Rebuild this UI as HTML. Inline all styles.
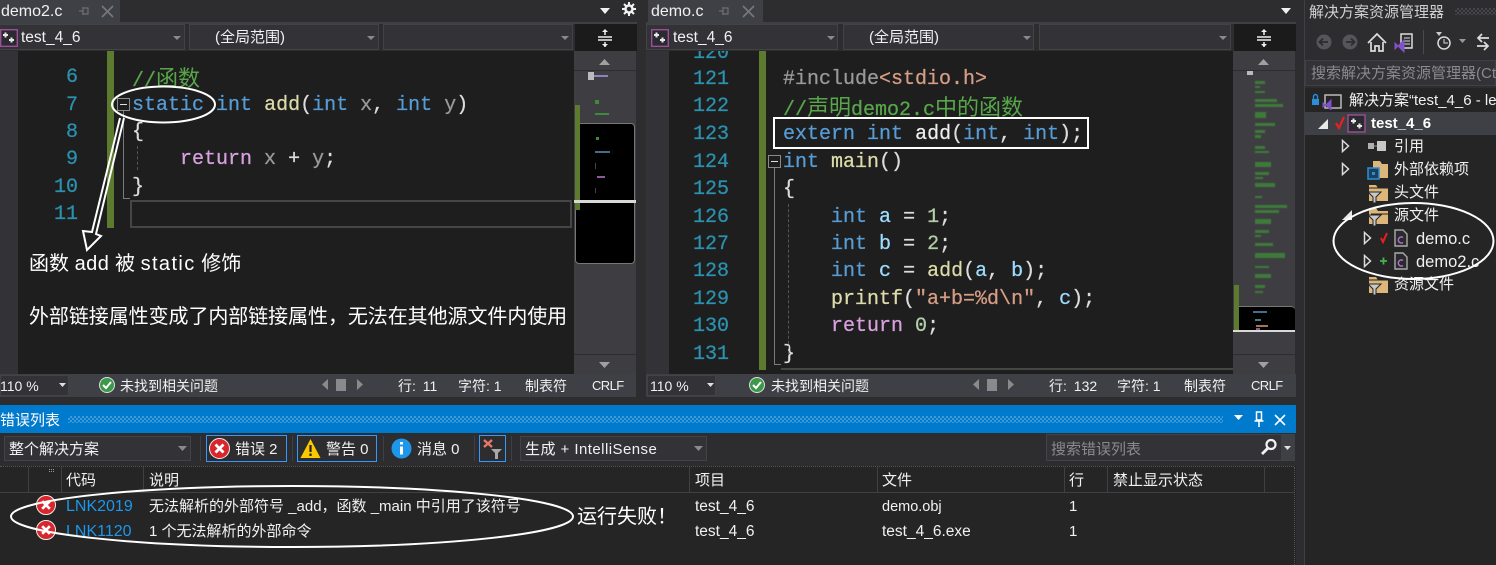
<!DOCTYPE html>
<html><head><meta charset="utf-8"><style>
html,body{margin:0;padding:0;background:#2d2d30;}
#r{position:relative;width:1496px;height:565px;overflow:hidden;background:#2d2d30;font-family:"Liberation Sans","Noto Sans CJK SC",sans-serif;color:#f1f1f1;font-size:15px;}
#r div{position:absolute;box-sizing:border-box;}
.u{white-space:pre;line-height:20px;height:21px;padding-top:1px;}
.c{white-space:pre;font-family:"Liberation Mono","Noto Sans CJK SC",monospace;font-size:20px;line-height:27px;height:27px;color:#dcdcdc;-webkit-text-stroke:.25px currentColor;}
.c i{font-style:normal;font-family:"Noto Sans CJK SC",sans-serif;font-size:22px;line-height:27px;-webkit-text-stroke:0;}
.n{white-space:pre;font-family:"Liberation Mono",monospace;font-size:20px;line-height:27px;height:27px;color:#2b91af;text-align:right;width:60px;-webkit-text-stroke:.25px currentColor;}
.k{color:#569cd6}.f{color:#dcdcaa}.g{color:#9a9a9a}.v{color:#9cdcfe}.m{color:#d8a0df}.o{color:#57a64a}.s{color:#d69d85}.b{color:#b5cea8}
.dd{background:#333337;border:1px solid #434346;height:26px;}
.big{white-space:pre;color:#fff;font-size:20px;line-height:28px;height:28px;}
.sep{width:1px;background:#3f3f46;}
</style></head><body><div id="r">

<!-- left tab + bars -->
<div style="left:0;top:0;width:120px;height:22px;background:#3f3f46"></div>
<div class="u" style="left:1px;top:1px;font-size:16px;color:#f1f1f1">demo2.c</div>
<svg style="position:absolute;left:78px;top:5px" width="12" height="12"><path d="M1 6h4M5 3h5v6H5zM5 2v8" stroke="#77777c" fill="none"/></svg>
<svg style="position:absolute;left:101px;top:5px" width="13" height="13"><path d="M1 1l11 11M12 1L1 12" stroke="#77777c" stroke-width="1.600"/></svg>
<div style="left:0;top:22px;width:637px;height:2px;background:#3f3f46"></div>
<div style="left:0;top:24px;width:637px;height:27px;background:#2d2d30"></div>
<div class="dd" style="left:-1px;top:24px;width:186px"></div>
<div class="dd" style="left:189px;top:24px;width:190px"></div>
<div class="dd" style="left:383px;top:24px;width:190px"></div>
<div class="u" style="left:21px;top:27px;font-size:15.500px">test_4_6</div>
<div class="u" style="left:215px;top:27px;font-size:15px">(全局范围)</div>
<svg style="position:absolute;left:0;top:29px" width="18" height="18"><rect x=".7" y=".7" width="16.6" height="16.6" fill="#2a2a30" stroke="#9b4f96" stroke-width="1.4"/><path d="M3 6h5M5.500 3.500v5M9 11h5M11.500 8.500v5" stroke="#e8e8e8" stroke-width="2"/></svg>
<svg style="position:absolute;left:172px;top:35px" width="12" height="6"><path d="M1 1h8L5 5z" fill="#8a8a8d"/></svg>
<svg style="position:absolute;left:366px;top:35px" width="12" height="6"><path d="M1 1h8L5 5z" fill="#8a8a8d"/></svg>
<svg style="position:absolute;left:560px;top:35px" width="12" height="6"><path d="M1 1h8L5 5z" fill="#8a8a8d"/></svg>
<div style="left:575px;top:24px;width:62px;height:27px;background:#1b1b1c"></div>
<svg style="position:absolute;left:597px;top:29px" width="16" height="18"><path d="M1 8h14M1 11h14M8 1v5M8 13v5" stroke="#eee" stroke-width="1.500"/><path d="M5 3l3-3 3 3zM5 15l3 3 3-3z" fill="#eee"/></svg>
<svg style="position:absolute;left:600px;top:8px" width="12" height="7"><path d="M0 0h10L5 6z" fill="#f1f1f1"/></svg>
<svg style="position:absolute;left:622px;top:2px" width="14" height="14" viewBox="0 0 14 14"><circle cx="7" cy="7" r="3.500" fill="none" stroke="#f1f1f1" stroke-width="2.500"/><path d="M7 0v3M7 11v3M0 7h3M11 7h3M2 2l2 2M10 10l2 2M12 2l-2 2M4 10l-2 2" stroke="#f1f1f1" stroke-width="2"/></svg>

<!-- left editor -->
<div style="left:0;top:51px;width:18px;height:323px;background:#333337"></div>
<div style="left:18px;top:51px;width:556px;height:323px;background:#1e1e1e"></div>
<div style="left:107px;top:51px;width:7px;height:177px;background:#5c7b2f"></div>
<div class="n" style="left:18px;top:64px">6</div>
<div class="n" style="left:18px;top:92px">7</div>
<div class="n" style="left:18px;top:119px">8</div>
<div class="n" style="left:18px;top:146px">9</div>
<div class="n" style="left:18px;top:174px">10</div>
<div class="n" style="left:18px;top:201px">11</div>
<div style="left:60px;top:51px;width:20px;height:4px;overflow:hidden"><div class="n" style="left:-42px;top:-20px">5</div></div>
<div class="c o" style="left:132px;top:64px">//<i>函数</i></div>
<div class="c" style="left:132px;top:92px"><span class="k">static</span> <span class="k">int</span> <span class="f">add</span>(<span class="k">int</span> <span class="g">x</span>, <span class="k">int</span> <span class="g">y</span>)</div>
<div class="c" style="left:132px;top:119px">{</div>
<div class="c" style="left:132px;top:146px">    <span class="m">return</span> <span class="g">x</span> + <span class="g">y</span>;</div>
<div class="c" style="left:132px;top:174px">}</div>
<div style="left:117px;top:98px;width:13px;height:13px;border:1px solid #8a8a8a;background:#1e1e1e"></div>
<div style="left:120px;top:104px;width:7px;height:1px;background:#e0e0e0"></div>
<div style="left:123px;top:111px;width:1px;height:88px;background:#7a7a7a"></div>
<div style="left:123px;top:198px;width:7px;height:1px;background:#7a7a7a"></div>
<div style="left:137px;top:146px;width:1px;height:24px;border-left:1px dashed #555"></div>
<div style="left:130px;top:200px;width:442px;height:28px;border:2px solid #464646"></div>

<!-- left scroll -->
<div style="left:574px;top:51px;width:62px;height:323px;background:#3e3e42"></div>
<div style="left:574px;top:70px;width:62px;height:1px;background:#2d2d30"></div>
<div style="left:574px;top:354px;width:62px;height:1px;background:#2d2d30"></div>
<svg style="position:absolute;left:598px;top:58px" width="14" height="8"><path d="M1 7h11L6.500 1z" fill="#a0a0a0"/></svg>
<svg style="position:absolute;left:598px;top:361px" width="14" height="8"><path d="M1 1h11L6.500 7z" fill="#a0a0a0"/></svg>
<div style="left:588px;top:72px;width:6px;height:8px;background:#bbb"></div>
<div style="left:594px;top:75px;width:14px;height:2px;background:#8a84c0"></div>
<div style="left:595px;top:100px;width:4px;height:4px;background:#3d8a3a"></div>
<div style="left:595px;top:113px;width:14px;height:2px;background:#3d8a3a"></div>
<div style="left:575px;top:123px;width:60px;height:141px;background:#000;border:1px solid #777;border-radius:4px"></div>
<div style="left:575px;top:105px;width:5px;height:105px;background:#5c7b2f"></div>
<div style="left:596px;top:137px;width:3px;height:3px;background:#3d8a3a"></div>
<div style="left:595px;top:151px;width:15px;height:2px;background:#4a6a8a"></div>
<div style="left:595px;top:163px;width:1px;height:6px;background:#444"></div>
<div style="left:597px;top:176px;width:8px;height:2px;background:#8a5a9a"></div>
<div style="left:595px;top:188px;width:1px;height:5px;background:#444"></div>
<div style="left:574px;top:200px;width:62px;height:3px;background:#d8d8d8"></div>

<!-- right tab + bars -->
<div style="left:648px;top:0;width:115px;height:22px;background:#3f3f46"></div>
<div class="u" style="left:651px;top:1px;font-size:16px">demo.c</div>
<svg style="position:absolute;left:718px;top:5px" width="12" height="12"><path d="M1 6h4M5 3h5v6H5zM5 2v8" stroke="#77777c" fill="none"/></svg>
<svg style="position:absolute;left:742px;top:5px" width="13" height="13"><path d="M1 1l11 11M12 1L1 12" stroke="#77777c" stroke-width="1.600"/></svg>
<div style="left:646px;top:22px;width:650px;height:2px;background:#3f3f46"></div>
<div class="dd" style="left:646px;top:24px;width:192px"></div>
<div class="dd" style="left:843px;top:24px;width:191px"></div>
<div class="dd" style="left:1039px;top:24px;width:192px"></div>
<div class="u" style="left:673px;top:27px;font-size:15.500px">test_4_6</div>
<div class="u" style="left:869px;top:27px;font-size:15px">(全局范围)</div>
<svg style="position:absolute;left:651px;top:29px" width="18" height="18"><rect x=".7" y=".7" width="16.6" height="16.6" fill="#2a2a30" stroke="#9b4f96" stroke-width="1.4"/><path d="M3 6h5M5.500 3.500v5M9 11h5M11.500 8.500v5" stroke="#e8e8e8" stroke-width="2"/></svg>
<svg style="position:absolute;left:826px;top:35px" width="12" height="6"><path d="M1 1h8L5 5z" fill="#8a8a8d"/></svg>
<svg style="position:absolute;left:1022px;top:35px" width="12" height="6"><path d="M1 1h8L5 5z" fill="#8a8a8d"/></svg>
<svg style="position:absolute;left:1218px;top:35px" width="12" height="6"><path d="M1 1h8L5 5z" fill="#8a8a8d"/></svg>
<div style="left:1234px;top:24px;width:62px;height:27px;background:#1b1b1c"></div>
<svg style="position:absolute;left:1256px;top:29px" width="16" height="18"><path d="M1 8h14M1 11h14M8 1v5M8 13v5" stroke="#eee" stroke-width="1.500"/><path d="M5 3l3-3 3 3zM5 15l3 3 3-3z" fill="#eee"/></svg>
<svg style="position:absolute;left:1281px;top:8px" width="12" height="7"><path d="M0 0h10L5 6z" fill="#f1f1f1"/></svg>

<!-- right editor -->
<div style="left:646px;top:51px;width:23px;height:323px;background:#333337"></div>
<div style="left:669px;top:51px;width:564px;height:323px;background:#1e1e1e"></div>
<div style="left:759px;top:51px;width:7px;height:319px;background:#5c7b2f"></div>
<div style="left:669px;top:51px;width:60px;height:12px;overflow:hidden"><div class="n" style="left:0;top:-11px">120</div></div>
<div class="n" style="left:669px;top:66px">121</div>
<div class="n" style="left:669px;top:93px">122</div>
<div class="n" style="left:669px;top:121px">123</div>
<div class="n" style="left:669px;top:149px">124</div>
<div class="n" style="left:669px;top:176px">125</div>
<div class="n" style="left:669px;top:204px">126</div>
<div class="n" style="left:669px;top:231px">127</div>
<div class="n" style="left:669px;top:258px">128</div>
<div class="n" style="left:669px;top:286px">129</div>
<div class="n" style="left:669px;top:313px">130</div>
<div class="n" style="left:669px;top:341px">131</div>
<div class="c" style="left:783px;top:66px"><span class="g">#include</span><span class="s">&lt;stdio.h&gt;</span></div>
<div class="c o" style="left:783px;top:93px">//<i>声明</i>demo2.c<i>中的函数</i></div>
<div class="c" style="left:783px;top:121px"><span class="k">extern</span> <span class="k">int</span> <span style="color:#eee">add</span>(<span class="k">int</span>, <span class="k">int</span>);</div>
<div class="c" style="left:783px;top:149px"><span class="k">int</span> <span class="f">main</span>()</div>
<div class="c" style="left:783px;top:176px">{</div>
<div class="c" style="left:783px;top:204px">    <span class="k">int</span> <span class="v">a</span> = <span class="b">1</span>;</div>
<div class="c" style="left:783px;top:231px">    <span class="k">int</span> <span class="v">b</span> = <span class="b">2</span>;</div>
<div class="c" style="left:783px;top:258px">    <span class="k">int</span> <span class="v">c</span> = <span class="f">add</span>(<span class="v">a</span>, <span class="v">b</span>);</div>
<div class="c" style="left:783px;top:286px">    <span class="f">printf</span>(<span class="s">"a+b=%d\n"</span>, <span class="v">c</span>);</div>
<div class="c" style="left:783px;top:313px">    <span class="m">return</span> <span class="b">0</span>;</div>
<div class="c" style="left:783px;top:341px">}</div>
<div style="left:768px;top:155px;width:13px;height:13px;border:1px solid #8a8a8a;background:#1e1e1e"></div>
<div style="left:771px;top:161px;width:7px;height:1px;background:#e0e0e0"></div>
<div style="left:774px;top:168px;width:1px;height:196px;background:#7a7a7a"></div>
<div style="left:774px;top:364px;width:7px;height:1px;background:#7a7a7a"></div>
<div style="left:788px;top:204px;width:1px;height:150px;border-left:1px dashed #555"></div>
<div style="left:781px;top:368px;width:452px;height:6px;border-top:2px solid #464646"></div>
<div style="left:773px;top:117px;width:316px;height:32px;border:2px solid #fff"></div>

<!-- right scroll -->
<div style="left:1233px;top:51px;width:62px;height:323px;background:#3e3e42"></div>
<div style="left:1233px;top:70px;width:62px;height:1px;background:#2d2d30"></div>
<div style="left:1233px;top:354px;width:62px;height:1px;background:#2d2d30"></div>
<svg style="position:absolute;left:1257px;top:58px" width="14" height="8"><path d="M1 7h11L6.500 1z" fill="#a0a0a0"/></svg>
<svg style="position:absolute;left:1257px;top:361px" width="14" height="8"><path d="M1 1h11L6.500 7z" fill="#a0a0a0"/></svg>
<div style="left:1247px;top:71px;width:6px;height:4px;background:#bbb"></div>
<svg style="position:absolute;left:1253px;top:78px;filter:blur(.6px);opacity:.8" width="40" height="230" fill="#3f8a38">
<rect x="2" y="3" width="10" height="3"/><rect x="2" y="8" width="5" height="2"/><rect x="2" y="13" width="10" height="2"/>
<rect x="2" y="21" width="22" height="3"/><rect x="2" y="26" width="28" height="3"/><rect x="2" y="34" width="11" height="6"/>
<rect x="2" y="45" width="20" height="3"/><rect x="2" y="52" width="10" height="3"/><rect x="2" y="57" width="6" height="3"/>
<rect x="2" y="68" width="10" height="3"/><rect x="2" y="73" width="14" height="2"/><rect x="2" y="84" width="16" height="5"/>
<rect x="2" y="94" width="14" height="3"/><rect x="2" y="99" width="8" height="2"/><rect x="2" y="105" width="20" height="4"/>
<rect x="2" y="118" width="7" height="2"/><rect x="2" y="127" width="32" height="3"/><rect x="2" y="132" width="24" height="3"/>
<rect x="2" y="141" width="16" height="5"/><rect x="2" y="152" width="14" height="3"/><rect x="2" y="157" width="6" height="2"/>
<rect x="2" y="165" width="18" height="3"/><rect x="2" y="175" width="30" height="5"/><rect x="2" y="188" width="14" height="2"/>
<rect x="2" y="196" width="16" height="4"/><rect x="2" y="207" width="10" height="3"/><rect x="2" y="213" width="8" height="2"/>
</svg>
<div style="left:1234px;top:306px;width:61px;height:24px;background:#000;border-top:1px solid #777;border-radius:4px 4px 0 0"></div>
<div style="left:1234px;top:285px;width:5px;height:45px;background:#5c7b2f"></div>
<div style="left:1253px;top:311px;width:14px;height:2px;background:#4a6a8a"></div>
<div style="left:1255px;top:319px;width:6px;height:2px;background:#4a7a8a"></div>
<div style="left:1256px;top:325px;width:12px;height:2px;background:#a07a4a"></div>
<div style="left:1256px;top:328px;width:4px;height:2px;background:#8a5a9a"></div>
<div style="left:1233px;top:330px;width:62px;height:2px;background:#d8d8d8"></div>

<!-- status bars -->
<div style="left:0;top:374px;width:636px;height:23px;background:#3f3f46"></div>
<div style="left:646px;top:374px;width:650px;height:23px;background:#3f3f46"></div>
<div style="left:0;top:375px;width:69px;height:21px;background:#333337;border:1px solid #434346"></div>
<div style="left:647px;top:375px;width:69px;height:21px;background:#333337;border:1px solid #434346"></div>
<div class="u" style="left:0;top:375px;font-size:14px">110 %</div>
<div class="u" style="left:650px;top:375px;font-size:14px">110 %</div>
<svg style="position:absolute;left:59px;top:383px" width="8" height="5"><path d="M0 0h7L3.500 4z" fill="#e0e0e0"/></svg>
<svg style="position:absolute;left:707px;top:383px" width="8" height="5"><path d="M0 0h7L3.500 4z" fill="#e0e0e0"/></svg>
<svg style="position:absolute;left:99px;top:377px" width="16" height="16"><circle cx="8" cy="8" r="7.500" fill="#3a9a4a" stroke="#ddd"/><path d="M4 8l3 3 5-6" stroke="#fff" stroke-width="2" fill="none"/></svg>
<svg style="position:absolute;left:749px;top:377px" width="16" height="16"><circle cx="8" cy="8" r="7.500" fill="#3a9a4a" stroke="#ddd"/><path d="M4 8l3 3 5-6" stroke="#fff" stroke-width="2" fill="none"/></svg>
<div class="u" style="left:120px;top:375px;font-size:14px;color:#f1f1f1">未找到相关问题</div>
<div class="u" style="left:771px;top:375px;font-size:14px;color:#f1f1f1">未找到相关问题</div>
<svg style="position:absolute;left:321px;top:378px" width="42" height="14"><path d="M7 1v11L1 6.500z" fill="#8a8a8d"/><rect x="15" y="1" width="10" height="12" fill="#8a8a8d"/><path d="M36 1v11l6-5.500z" fill="#8a8a8d"/></svg>
<svg style="position:absolute;left:972px;top:378px" width="42" height="14"><path d="M7 1v11L1 6.500z" fill="#8a8a8d"/><rect x="15" y="1" width="10" height="12" fill="#8a8a8d"/><path d="M36 1v11l6-5.500z" fill="#8a8a8d"/></svg>
<div class="u" style="left:398px;top:375px;font-size:14px;word-spacing:3px">行: 11</div>
<div class="u" style="left:458px;top:375px;font-size:14px">字符: 1</div>
<div class="u" style="left:525px;top:375px;font-size:14px">制表符</div>
<div class="u" style="left:592px;top:375px;font-size:13px;letter-spacing:-.6px">CRLF</div>
<div class="u" style="left:1049px;top:375px;font-size:14px;word-spacing:3px">行: 132</div>
<div class="u" style="left:1117px;top:375px;font-size:14px">字符: 1</div>
<div class="u" style="left:1184px;top:375px;font-size:14px">制表符</div>
<div class="u" style="left:1251px;top:375px;font-size:13px;letter-spacing:-.6px">CRLF</div>

<!-- error list -->
<div style="left:0;top:405px;width:1296px;height:28px;background:#007acc"></div>
<div style="left:68px;top:416px;width:1155px;height:7px;background:repeating-conic-gradient(#3f9bd8 0 25%,#007acc 0 50%) 0 0/4px 4px"></div>
<div class="u" style="left:0;top:410px;font-size:15px;color:#fff">错误列表</div>
<svg style="position:absolute;left:1234px;top:415px" width="10" height="6"><path d="M0 0h9L4.500 5z" fill="#fff"/></svg>
<svg style="position:absolute;left:1253px;top:411px" width="12" height="16"><path d="M3.500 1h5v8h-5zM1.500 10h9M6 10v6" stroke="#fff" stroke-width="1.500" fill="none"/></svg>
<svg style="position:absolute;left:1274px;top:414px" width="12" height="12"><path d="M1 1l10 10M11 1L1 11" stroke="#fff" stroke-width="1.600"/></svg>
<div style="left:0;top:433px;width:1296px;height:132px;background:#252526"></div>
<div style="left:0;top:433px;width:1296px;height:33px;background:#2d2d30"></div>
<div class="dd" style="left:4px;top:436px;width:187px;height:25px"></div>
<div class="u" style="left:9px;top:439px">整个解决方案</div>
<svg style="position:absolute;left:178px;top:446px" width="10" height="6"><path d="M0 0h9L4.500 5z" fill="#8a8a8d"/></svg>
<div style="left:206px;top:435px;width:81px;height:27px;border:1px solid #3399ff"></div>
<svg style="position:absolute;left:209px;top:438px" width="21" height="21" viewBox="0 0 21 21"><circle cx="10.500" cy="10.500" r="10" fill="#d8262c" stroke="#f0f0f0" stroke-width="1"/><path d="M6.500 6.500l8 8M14.500 6.500l-8 8" stroke="#fff" stroke-width="2.800"/></svg>
<div class="u" style="left:235px;top:439px">错误 2</div>
<div style="left:297px;top:435px;width:80px;height:27px;border:1px solid #3399ff"></div>
<svg style="position:absolute;left:300px;top:438px" width="21" height="21" viewBox="0 0 21 21"><path d="M10.500 1L20.500 20H.5z" fill="#fcc800"/><path d="M10.500 7v7M10.500 15.500v2.500" stroke="#222" stroke-width="2.200"/></svg>
<div class="u" style="left:326px;top:439px">警告 0</div>
<svg style="position:absolute;left:391px;top:438px" width="21" height="21" viewBox="0 0 21 21"><circle cx="10.500" cy="10.500" r="10" fill="#1c97ea"/><path d="M10.500 8.500v8M10.500 4v2.500" stroke="#fff" stroke-width="3"/></svg>
<div class="u" style="left:417px;top:439px">消息 0</div>
<div style="left:479px;top:435px;width:27px;height:27px;border:1px solid #3399ff"></div>
<svg style="position:absolute;left:483px;top:438px" width="20" height="21"><path d="M1 2l8 7M9 2L1 9" stroke="#e8786a" stroke-width="2.400"/><path d="M8 11h11l-4 4v6h-3v-6z" fill="#a8a8a8"/></svg>
<div class="sep" style="left:200px;top:436px;height:25px"></div>
<div class="sep" style="left:292px;top:436px;height:25px"></div>
<div class="sep" style="left:383px;top:436px;height:25px"></div>
<div class="sep" style="left:474px;top:436px;height:25px"></div>
<div class="sep" style="left:511px;top:436px;height:25px"></div>
<div class="dd" style="left:520px;top:436px;width:187px;height:25px"></div>
<div class="u" style="left:525px;top:439px;letter-spacing:.45px">生成 + IntelliSense</div>
<svg style="position:absolute;left:694px;top:446px" width="10" height="6"><path d="M0 0h9L4.500 5z" fill="#8a8a8d"/></svg>
<div class="dd" style="left:1046px;top:434px;width:249px;height:27px"></div>
<div class="u" style="left:1051px;top:439px;color:#8a8a8d">搜索错误列表</div>
<div style="left:1281px;top:435px;width:14px;height:25px;background:#3f3f46"></div>
<svg style="position:absolute;left:1260px;top:438px" width="18" height="18"><circle cx="11" cy="6.500" r="4.500" fill="none" stroke="#f1f1f1" stroke-width="2.200"/><path d="M8 10l-6 6" stroke="#f1f1f1" stroke-width="2.800"/></svg>
<svg style="position:absolute;left:1284px;top:446px" width="8" height="5"><path d="M0 0h7L3.500 4z" fill="#e0e0e0"/></svg>

<div style="left:0;top:466px;width:1294px;height:1px;border-top:1px dotted #555"></div>
<div style="left:0;top:492px;width:1294px;height:1px;background:#3f3f46"></div>
<div class="sep" style="left:28px;top:467px;height:25px"></div>
<div class="sep" style="left:61px;top:467px;height:25px"></div>
<div class="sep" style="left:143px;top:467px;height:25px"></div>
<div class="sep" style="left:689px;top:467px;height:25px"></div>
<div class="sep" style="left:877px;top:467px;height:25px"></div>
<div class="sep" style="left:1064px;top:467px;height:25px"></div>
<div class="sep" style="left:1107px;top:467px;height:25px"></div>
<div class="sep" style="left:1264px;top:467px;height:25px"></div>
<div style="left:1294px;top:467px;width:1px;height:98px;border-left:1px dotted #555"></div>
<div style="left:49px;top:469px;width:5px;height:3px;border-top:1px dotted #999;border-bottom:1px dotted #999"></div>
<div class="u" style="left:66px;top:470px">代码</div>
<div class="u" style="left:149px;top:470px">说明</div>
<div class="u" style="left:695px;top:470px">项目</div>
<div class="u" style="left:882px;top:470px">文件</div>
<div class="u" style="left:1069px;top:470px">行</div>
<div class="u" style="left:1113px;top:470px">禁止显示状态</div>

<svg style="position:absolute;left:36px;top:495px" width="20" height="20" viewBox="0 0 21 21"><circle cx="10.500" cy="10.500" r="10" fill="#d8262c" stroke="#f0f0f0" stroke-width="1"/><path d="M6.500 6.500l8 8M14.500 6.500l-8 8" stroke="#fff" stroke-width="2.800"/></svg>
<svg style="position:absolute;left:36px;top:520px" width="20" height="20" viewBox="0 0 21 21"><circle cx="10.500" cy="10.500" r="10" fill="#d8262c" stroke="#f0f0f0" stroke-width="1"/><path d="M6.500 6.500l8 8M14.500 6.500l-8 8" stroke="#fff" stroke-width="2.800"/></svg>
<div class="u" style="left:66px;top:496px;color:#1c97ea;font-size:16px">LNK2019</div>
<div class="u" style="left:66px;top:521px;color:#1c97ea;font-size:16px">LNK1120</div>
<div class="u" style="left:149px;top:496px">无法解析的外部符号 _add，函数 _main 中引用了该符号</div>
<div class="u" style="left:149px;top:521px">1 个无法解析的外部命令</div>
<div class="u" style="left:695px;top:496px;font-size:15.500px">test_4_6</div>
<div class="u" style="left:695px;top:521px;font-size:15.500px">test_4_6</div>
<div class="u" style="left:882px;top:496px;font-size:14.500px">demo.obj</div>
<div class="u" style="left:882px;top:521px;font-size:15.500px">test_4_6.exe</div>
<div class="u" style="left:1069px;top:496px">1</div>
<div class="u" style="left:1069px;top:521px">1</div>

<!-- solution explorer -->
<div style="left:1296px;top:0;width:9px;height:565px;background:#2d2d30"></div>
<div style="left:1304px;top:0;width:1px;height:565px;background:#3f3f46"></div>
<div style="left:1305px;top:88px;width:191px;height:477px;background:#252526"></div>
<div class="u" style="left:1309px;top:2px;color:#d0d0d0">解决方案资源管理器</div>
<div style="left:1455px;top:8px;width:41px;height:7px;background:repeating-conic-gradient(#46464a 0 25%,#2d2d30 0 50%) 0 0/4px 4px"></div>
<svg style="position:absolute;left:1314px;top:30px" width="182" height="26">
<circle cx="10" cy="12" r="7.500" fill="#55555a"/><path d="M14 12H6M9 8.500L5.500 12l3.500 3.500" stroke="#2d2d30" stroke-width="1.800" fill="none"/>
<circle cx="36" cy="12" r="7.500" fill="#55555a"/><path d="M32 12h8M37 8.500l3.500 3.500-3.500 3.500" stroke="#2d2d30" stroke-width="1.800" fill="none"/>
<path d="M54 13l9-9 9 9M57 12v9h4v-5h4v5h4v-9" fill="none" stroke="#dcdcdc" stroke-width="1.700"/>
<rect x="87" y="4" width="11" height="14" fill="#2d2d30" stroke="#dcdcdc" stroke-width="1.500"/><path d="M90 8h6M90 11h6M90 14h6" stroke="#dcdcdc"/>
<path d="M81 13l3 3 6-6v12l-6-6-3 3z" fill="#8052c8" stroke="#8052c8"/>
<rect x="109" y="-2" width="1" height="26" fill="#4a4a4e"/>
<path d="M122 2h6l-3 4z" fill="#ccc"/><circle cx="130" cy="13" r="6" fill="none" stroke="#dcdcdc" stroke-width="1.500"/><path d="M130 9v4h4" stroke="#dcdcdc" fill="none"/>
<path d="M145 9h7l-3.500 4z" fill="#999"/>
<path d="M175 8h-11M168 4l-4 4 4 4M163 16h11M170 12l4 4-4 4" stroke="#dcdcdc" stroke-width="1.700" fill="none"/>
</svg>
<div style="left:1305px;top:60px;width:191px;height:26px;background:#333337;border:1px solid #3f3f46"></div>
<div class="u" style="left:1311px;top:63px;color:#8a8a8d;width:185px;overflow:hidden">搜索解决方案资源管理器(Ctrl+;)</div>
<div style="left:1305px;top:112px;width:191px;height:23px;background:#3f3f46"></div>
<svg style="position:absolute;left:1311px;top:92px" width="36" height="18"><rect x="1" y="7" width="7" height="6" fill="#2b8fd8"/><path d="M2.500 7V4.500a2 2 0 014 0V7" stroke="#2b8fd8" fill="none" stroke-width="1.400"/>
<rect x="14" y="3" width="16" height="13" fill="none" stroke="#bbb" stroke-width="1.500"/><path d="M12 11l3 2 5-5v10l-5-5-3 2z" fill="#8052c8" stroke="#8052c8"/></svg>
<div class="u" style="left:1349px;top:90px;width:147px;overflow:hidden">解决方案“test_4_6 - le</div>
<svg style="position:absolute;left:1318px;top:118px" width="12" height="12"><path d="M10 1v10H0z" fill="#e8e8e8"/></svg>
<svg style="position:absolute;left:1334px;top:116px" width="12" height="14"><path d="M2 7l3 5 5-11" stroke="#e82020" stroke-width="2.200" fill="none"/></svg>
<svg style="position:absolute;left:1347px;top:114px" width="20" height="20"><rect x="1" y="1" width="17" height="17" fill="#2a2a30" stroke="#9b4f96" stroke-width="1.400"/><path d="M4 7h5M6.500 4.500v5M10 12h5M12.500 9.500v5" stroke="#e8e8e8" stroke-width="2"/></svg>
<div class="u" style="left:1371px;top:113px;font-weight:bold;color:#fff;font-size:15px">test_4_6</div>

<svg style="position:absolute;left:1341px;top:139px" width="10" height="14"><path d="M1.500 1.500l6 5.500-6 5.500z" fill="none" stroke="#dcdcdc" stroke-width="1.500"/></svg>
<svg style="position:absolute;left:1341px;top:162px" width="10" height="14"><path d="M1.500 1.500l6 5.500-6 5.500z" fill="none" stroke="#dcdcdc" stroke-width="1.500"/></svg>
<svg style="position:absolute;left:1342px;top:209px" width="12" height="12"><path d="M10 1v10H0z" fill="#e8e8e8"/></svg>
<svg style="position:absolute;left:1363px;top:231px" width="10" height="14"><path d="M1.500 1.500l6 5.500-6 5.500z" fill="none" stroke="#dcdcdc" stroke-width="1.500"/></svg>
<svg style="position:absolute;left:1363px;top:254px" width="10" height="14"><path d="M1.500 1.500l6 5.500-6 5.500z" fill="none" stroke="#dcdcdc" stroke-width="1.500"/></svg>

<svg style="position:absolute;left:1367px;top:139px" width="20" height="14"><rect x="1" y="4" width="6" height="6" fill="#b0b0b0"/><rect x="10" y="2" width="9" height="10" fill="#c8c8c8"/><path d="M7 7h3" stroke="#999"/></svg>
<svg style="position:absolute;left:1367px;top:160px" width="22" height="20"><path d="M6 1h7l2 3h6v14H6z" fill="#dcb67a"/><rect x="1" y="8" width="11" height="11" fill="#1d3f5a" stroke="#2b8fd8" stroke-width="1.500"/><rect x="5" y="12" width="3" height="3" fill="#2b8fd8"/></svg>
<svg style="position:absolute;left:1367px;top:183px" width="22" height="20"><path d="M2 2h7l2 3h10v13H2z" fill="#dcb67a"/><path d="M2 5h19" stroke="#252526"/><path d="M1 9h13l-5 5v6H6v-6z" fill="#c8c8c8" stroke="#252526"/></svg>
<svg style="position:absolute;left:1367px;top:206px" width="22" height="20"><path d="M2 2h7l2 3h10v13H2z" fill="#dcb67a"/><path d="M4 8h17" stroke="#252526"/><path d="M1 9h13l-5 5v6H6v-6z" fill="#c8c8c8" stroke="#252526"/></svg>
<svg style="position:absolute;left:1367px;top:275px" width="22" height="20"><path d="M2 2h7l2 3h10v13H2z" fill="#dcb67a"/><path d="M2 5h19" stroke="#252526"/><path d="M1 9h13l-5 5v6H6v-6z" fill="#c8c8c8" stroke="#252526"/></svg>
<div class="u" style="left:1394px;top:136px">引用</div>
<div class="u" style="left:1394px;top:159px">外部依赖项</div>
<div class="u" style="left:1394px;top:182px">头文件</div>
<div class="u" style="left:1394px;top:205px">源文件</div>
<div class="u" style="left:1394px;top:274px">资源文件</div>
<svg style="position:absolute;left:1379px;top:231px" width="10" height="14"><path d="M2 7l2 4 4-9" stroke="#e82020" stroke-width="2" fill="none"/></svg>
<svg style="position:absolute;left:1379px;top:256px" width="10" height="10"><path d="M1 5h7M4.500 1.500v7" stroke="#4caf50" stroke-width="1.800"/></svg>
<svg style="position:absolute;left:1393px;top:229px" width="16" height="18"><path d="M2 1h8l4 4v12H2z" fill="#2a2a2d" stroke="#aaa" stroke-width="1.400"/><path d="M10 8.500a3 3 0 100 5" stroke="#b070c8" stroke-width="1.500" fill="none"/></svg>
<svg style="position:absolute;left:1393px;top:252px" width="16" height="18"><path d="M2 1h8l4 4v12H2z" fill="#2a2a2d" stroke="#aaa" stroke-width="1.400"/><path d="M10 8.500a3 3 0 100 5" stroke="#b070c8" stroke-width="1.500" fill="none"/></svg>
<div class="u" style="left:1416px;top:228px;font-size:16.500px">demo.c</div>
<div class="u" style="left:1416px;top:251px;font-size:16.500px">demo2.c</div>

<!-- annotations -->
<svg style="position:absolute;left:0;top:0" width="1496" height="565" fill="none" stroke="#fff">
<ellipse cx="163.500" cy="104.500" rx="51.500" ry="18" stroke-width="2"/>
<ellipse cx="1413.500" cy="241" rx="80" ry="38" stroke-width="2"/>
<ellipse cx="292" cy="516.500" rx="281" ry="30.500" stroke-width="2"/>
<path d="M120 118L92 232L83 231L87 250L101 236L96 234L124 118" stroke-width="2" stroke-linejoin="miter"/>
</svg>
<div class="big" style="left:29px;top:250px">函数 <span style="letter-spacing:.5px">add</span> 被 <span style="letter-spacing:1.400px">static</span> 修饰</div>
<div class="big" style="left:29px;top:303px;letter-spacing:-.07px">外部链接属性变成了内部链接属性，无法在其他源文件内使用</div>
<div class="big" style="left:577px;top:503px;font-size:20px">运行失败！</div>

</div></body></html>
